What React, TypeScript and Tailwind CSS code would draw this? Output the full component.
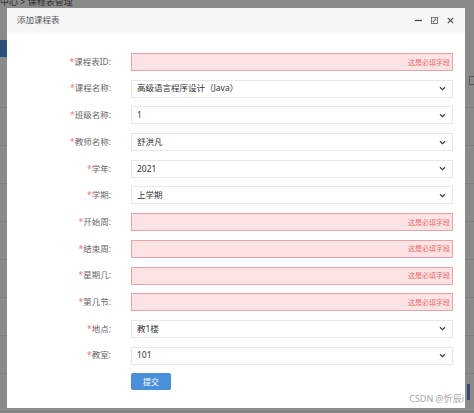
import React from 'react';

type Field = {
  label: string;
  kind: 'error' | 'select';
  value?: string;
};

const fields: Field[] = [
  { label: '课程表ID', kind: 'error' },
  { label: '课程名称', kind: 'select', value: '高级语言程序设计（Java）' },
  { label: '班级名称', kind: 'select', value: '1' },
  { label: '教师名称', kind: 'select', value: '舒洪凡' },
  { label: '学年', kind: 'select', value: '2021' },
  { label: '学期', kind: 'select', value: '上学期' },
  { label: '开始周', kind: 'error' },
  { label: '结束周', kind: 'error' },
  { label: '星期几', kind: 'error' },
  { label: '第几节', kind: 'error' },
  { label: '地点', kind: 'select', value: '教1楼' },
  { label: '教室', kind: 'select', value: '101' },
];

const Chevron = () => (
  <svg width="7" height="5" viewBox="0 0 7 5" className="shrink-0">
    <path d="M1 1.2 L3.5 3.6 L6 1.2" fill="none" stroke="#444" strokeWidth="1.3" />
  </svg>
);

const FormRow: React.FC<{ field: Field }> = ({ field }) => (
  <div className="flex items-center h-[18px]">
    <div className="w-[124px] pr-[20px] text-right text-[8.5px] text-[#666] leading-none">
      <span className="text-[#f07070]">*</span>
      {field.label}:
    </div>
    {field.kind === 'error' ? (
      <div className="w-[322px] h-full bg-[#fde3e4] border border-[#e6a3a6] flex items-center justify-end pr-[2px]">
        <span className="text-[7px] text-[#ef6b6b] leading-none">这是必填字段</span>
      </div>
    ) : (
      <div className="w-[322px] h-full bg-white border border-[#e8e8e8] flex items-center justify-between pl-[5px] pr-[6px]">
        <span className="text-[8.5px] text-[#333] leading-none">{field.value}</span>
        <Chevron />
      </div>
    )}
  </div>
);

export default function App() {
  return (
    <div
      className="relative w-[474px] h-[413px] overflow-hidden bg-[#8a8a8a]"
      style={{ fontFamily: '"Noto Sans", "Noto Sans CJK SC", sans-serif' }}
    >
      {/* page behind the overlay */}
      <div className="absolute left-0 top-[-3px] text-[9px] text-[#2a2a2a] leading-none whitespace-nowrap">
        中心 &gt; 课程表管理
      </div>
      <div className="absolute left-0 top-[40px] w-[8px] h-[17px] bg-[#2f4f7a]" />
      <div className="absolute left-0 top-[70px] w-full flex flex-col">
        {[0, 1, 2, 3, 4, 5, 6, 7, 8].map((i) => (
          <div key={i} className="h-[38px] border-b border-[#7d7d7d]" />
        ))}
      </div>
      <div className="absolute left-[469px] top-[76px] w-[6px] h-[9px] border border-[#555]" />
      <div className="absolute left-[467px] top-[384px] w-[3px] h-[16px] bg-[#2f4f7a]" />

      {/* dialog */}
      <div className="absolute left-[7px] top-[8px] w-[458px] h-[400px] bg-white">
        <div className="h-[25px] bg-[#f7f7f7] flex items-center justify-between pl-[10px] pr-[11px]">
          <span className="text-[8.5px] text-[#555] leading-none">添加课程表</span>
          <div className="flex items-center gap-[9px]">
            <svg width="7" height="7" viewBox="0 0 7 7">
              <path d="M0 3.5 H7" stroke="#444" strokeWidth="1.2" />
            </svg>
            <svg width="7" height="7" viewBox="0 0 7 7">
              <rect x="0.5" y="0.5" width="6" height="6" fill="none" stroke="#666" strokeWidth="0.9" />
              <path d="M2 5 L5 2 M3.3 2 H5 V3.7 M2 3.3 V5 H3.7" fill="none" stroke="#666" strokeWidth="0.8" />
            </svg>
            <svg width="7" height="7" viewBox="0 0 7 7">
              <path d="M0.8 0.8 L6.2 6.2 M6.2 0.8 L0.8 6.2" stroke="#444" strokeWidth="1.1" />
            </svg>
          </div>
        </div>
        <div className="pt-[20px] flex flex-col gap-[8.7px]">
          {fields.map((f) => (
            <FormRow key={f.label} field={f} />
          ))}
          <div className="flex pl-[124px]">
            <button className="w-[40px] h-[17px] rounded-[2px] bg-[#4a8fdc] text-white text-[8px] leading-none">
              提交
            </button>
          </div>
        </div>
      </div>

      {/* watermark */}
      <div className="absolute right-[10px] top-[394px] text-[9px] text-[#a8a8a8] leading-none whitespace-nowrap">
        CSDN @忻辰i
      </div>
    </div>
  );
}
